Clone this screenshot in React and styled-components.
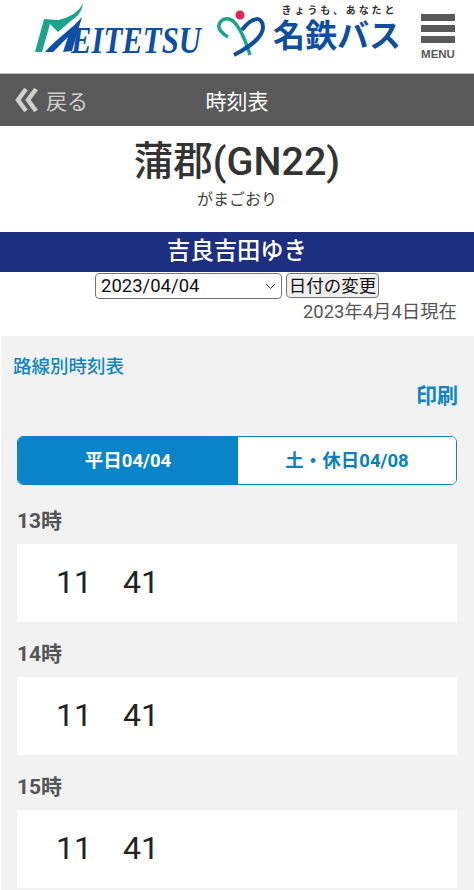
import React from "react";
import styled, { createGlobalStyle } from "styled-components";

const GlobalStyle = createGlobalStyle`
  html, body {
    margin: 0;
    padding: 0;
    height: 890px;
    overflow: hidden;
    background: #fff;
    font-family: Roboto, "Noto Sans CJK JP", sans-serif;
  }
`;

const Page = styled.div`
  width: 474px;
  height: 890px;
  overflow: hidden;
`;

const Header = styled.header`
  height: 73px;
  display: flex;
  align-items: flex-start;
  padding-left: 35px;
  box-sizing: border-box;
`;

const LogoText = styled.span`
  display: block;
  font-family: "Liberation Serif", serif;
  font-style: italic;
  font-weight: 700;
  font-size: 38px;
  line-height: 30px;
  color: #0d4ea6;
  white-space: nowrap;
  transform: scaleX(0.81);
  transform-origin: left top;
`;

const MeitetsuLogo = styled.div`
  position: relative;
  width: 168px;
  height: 56px;
  flex: none;
  margin-right: 14px;

  svg {
    position: absolute;
    left: 0;
    top: 0;
  }

  ${LogoText} {
    position: absolute;
    left: 36px;
    top: 25px;
  }
`;

const BusLogo = styled.div`
  display: flex;
  flex: none;
  width: 187px;
`;

const BusText = styled.div`
  display: flex;
  flex-direction: column;
  align-items: center;
  margin-left: 8px;
`;

const Tagline = styled.div`
  font-size: 10px;
  line-height: 12px;
  font-weight: 700;
  letter-spacing: 2.9px;
  color: #333;
  margin-top: 5px;
  margin-left: 5px;
`;

const BusName = styled.div`
  font-size: 32px;
  line-height: 36px;
  font-weight: 700;
  color: #0d4f9e;
  white-space: nowrap;
  margin-top: 1px;
`;

const MenuButton = styled.div`
  width: 34px;
  margin-left: 17px;
  margin-top: 14px;
  display: flex;
  flex-direction: column;
  gap: 4px;
  align-items: center;
`;

const MenuBar = styled.span`
  display: block;
  width: 34px;
  height: 7px;
  background: #595959;
`;

const MenuLabel = styled.span`
  font-family: "Liberation Sans", sans-serif;
  font-size: 11.5px;
  line-height: 13px;
  font-weight: 700;
  color: #595959;
  margin-top: 1px;
`;

const NavBar = styled.nav`
  height: 53px;
  background: #595959;
  border-top: 1px solid #bdbdbd;
  box-sizing: border-box;
  display: grid;
  grid-template-columns: 1fr auto 1fr;
  align-items: center;
  color: #fff;
`;

const BackLink = styled.a`
  display: flex;
  align-items: center;
  gap: 7px;
  padding-left: 15px;
  font-size: 21px;
  color: #cfcfcf;
`;

const NavTitle = styled.div`
  font-size: 21px;
  color: #fff;
`;

const StationBlock = styled.div`
  height: 106px;
  box-sizing: border-box;
  padding-top: 13px;
  text-align: center;
`;

const StationName = styled.h1`
  margin: 0;
  font-size: 39.5px;
  line-height: 46px;
  font-weight: 500;
  color: #333;
`;

const StationKana = styled.div`
  font-size: 16px;
  line-height: 22px;
  margin-top: 4px;
  color: #444;
`;

const Direction = styled.div`
  height: 40px;
  background: #1c2f80;
  color: #fff;
  font-size: 23.3px;
  line-height: 38px;
  font-weight: 500;
  text-align: center;
`;

const DateForm = styled.div`
  display: flex;
  justify-content: center;
  gap: 4px;
  height: 28px;
  box-sizing: border-box;
  padding-top: 1px;
`;

const SelectWrap = styled.div`
  position: relative;
  width: 187px;
  height: 26px;

  svg {
    position: absolute;
    right: 6px;
    top: 10px;
    pointer-events: none;
  }
`;

const DateSelect = styled.select`
  appearance: none;
  width: 100%;
  height: 100%;
  box-sizing: border-box;
  margin: 0;
  font-family: inherit;
  font-size: 18.5px;
  color: #111;
  background: #fff;
  border: 1px solid #767676;
  border-radius: 4px;
  padding: 0 0 0 5px;
`;

const DateButton = styled.button`
  width: 93px;
  height: 25px;
  box-sizing: border-box;
  padding: 0;
  font-family: inherit;
  font-size: 17.5px;
  line-height: 22px;
  color: #111;
  background: #efefef;
  border: 1px solid #767676;
  border-radius: 4px;
`;

const AsOf = styled.div`
  height: 36px;
  padding-right: 17px;
  text-align: right;
  font-size: 18.4px;
  line-height: 24px;
  color: #555;
`;

const Panel = styled.section`
  background: #f2f2f2;
  margin-left: 1px;
  padding: 18px 17px 10px 16px;
`;

const SectionLabel = styled.div`
  margin-left: -4px;
  font-size: 18.5px;
  line-height: 26px;
  font-weight: 500;
  color: #0f86c4;
`;

const PrintLink = styled.div`
  margin-top: 2px;
  margin-right: -1px;
  text-align: right;
  font-size: 21px;
  line-height: 28px;
  font-weight: 700;
  color: #0f86c4;
`;

const Tabs = styled.div`
  display: grid;
  grid-template-columns: 220px 1fr;
  height: 49px;
  margin-top: 26px;
  box-sizing: border-box;
  border: 1.5px solid #0a84c8;
  border-radius: 6px;
  overflow: hidden;
  background: #fff;
`;

const Tab = styled.div`
  display: flex;
  align-items: center;
  justify-content: center;
  padding-bottom: 3px;
  font-size: 18.5px;
  font-weight: 700;
  background: ${(p) => (p.$active ? "#0a84c8" : "#fff")};
  color: ${(p) => (p.$active ? "#fff" : "#0a7fc0")};
`;

const HourGroup = styled.div`
  margin-top: ${(p) => (p.$first ? "23px" : "19px")};
`;

const HourLabel = styled.div`
  font-size: 21px;
  line-height: 26px;
  font-weight: 700;
  color: #555;
  margin-bottom: 10px;
`;

const MinuteRow = styled.div`
  height: 78px;
  box-sizing: border-box;
  background: #fff;
  display: flex;
  align-items: center;
  gap: 31px;
  padding: 0 0 3px 39px;
  font-size: 32px;
  color: #222;
`;

const hours = ["13時", "14時", "15時"];

const App = () => {
  return (
    <Page>
      <GlobalStyle />
      <Header>
        <MeitetsuLogo>
          <svg width="60" height="56" viewBox="0 0 60 56">
            <path d="M0 52 L9 19 L23 20 C34 18 44 12 48 3 C47 12 42 17 37 20 L23 32 L15 24 L7 52 Z" fill="#1ba48c" />
            <path d="M10 52 C22 38 38 28 47 17 L37 51 L28 52 L33 37 L18 52 Z" fill="#0d4ea6" />
          </svg>
          <LogoText>EITETSU</LogoText>
        </MeitetsuLogo>
        <BusLogo>
          <svg width="48" height="58" viewBox="0 0 48 58" style={{ flex: "none" }}>
            <path d="M11 37 C4 33 1 28 2 25 C4 18 12 17 17 22 C24 29 29 42 33 55" fill="none" stroke="#1ba48c" strokeWidth="3.5" />
            <path d="M17 55 C32 47 46 38 46 27 C46 17 36 15 25 30" fill="none" stroke="#0d4f9e" strokeWidth="4" />
            <circle cx="23" cy="15" r="4.5" fill="#e0245e" />
          </svg>
          <BusText>
            <Tagline>きょうも、あなたと</Tagline>
            <BusName>名鉄バス</BusName>
          </BusText>
        </BusLogo>
        <MenuButton>
          <MenuBar />
          <MenuBar />
          <MenuBar />
          <MenuLabel>MENU</MenuLabel>
        </MenuButton>
      </Header>
      <NavBar>
        <BackLink>
          <svg width="24" height="26" viewBox="0 0 24 26">
            <path d="M11 2 L3 13 L11 24 M21 2 L13 13 L21 24" fill="none" stroke="#cfcfcf" strokeWidth="4.5" />
          </svg>
          戻る
        </BackLink>
        <NavTitle>時刻表</NavTitle>
        <span />
      </NavBar>
      <StationBlock>
        <StationName>蒲郡(GN22)</StationName>
        <StationKana>がまごおり</StationKana>
      </StationBlock>
      <Direction>吉良吉田ゆき</Direction>
      <DateForm>
        <SelectWrap>
          <DateSelect defaultValue="2023/04/04">
            <option>2023/04/04</option>
          </DateSelect>
          <svg width="11" height="7" viewBox="0 0 11 7">
            <path d="M1 1 L5.5 5.5 L10 1" fill="none" stroke="#333" strokeWidth="1" />
          </svg>
        </SelectWrap>
        <DateButton>日付の変更</DateButton>
      </DateForm>
      <AsOf>2023年4月4日現在</AsOf>
      <Panel>
        <SectionLabel>路線別時刻表</SectionLabel>
        <PrintLink>印刷</PrintLink>
        <Tabs>
          <Tab $active>平日04/04</Tab>
          <Tab>土・休日04/08</Tab>
        </Tabs>
        {hours.map((hour, index) => (
          <HourGroup key={hour} $first={index === 0}>
            <HourLabel>{hour}</HourLabel>
            <MinuteRow>
              <span>11</span>
              <span>41</span>
            </MinuteRow>
          </HourGroup>
        ))}
      </Panel>
    </Page>
  );
};

export default App;
